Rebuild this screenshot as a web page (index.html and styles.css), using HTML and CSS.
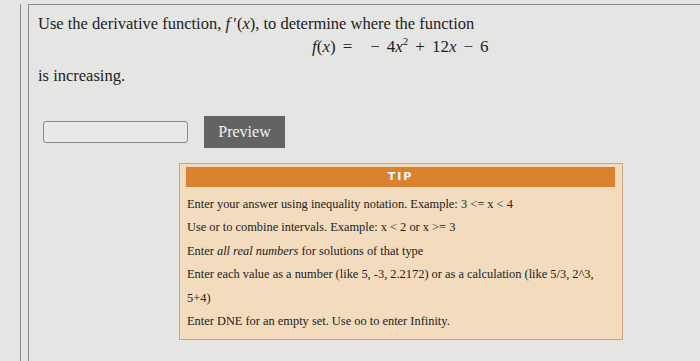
FILE: index.html
```html
<!DOCTYPE html>
<html>
<head>
  <title>Increasing interval</title>
  <link rel="stylesheet" href="styles.css">
</head>
<body>
  <div class="page">
    <div class="problem">
      <p class="question">Use the derivative function, <i>f</i>&thinsp;&prime;(<i>x</i>), to determine where the function</p>
      <div class="math"><i>f</i>(<i>x</i>)<span class="op">=</span><span class="op">&minus;</span>4<i>x</i><sup>2</sup><span class="op">+</span>12<i>x</i><span class="op">&minus;</span>6</div>
      <p class="question">is increasing.</p>

      <div class="answer-row">
        <input type="text" class="answer-input">
        <button class="preview-button">Preview</button>
      </div>

      <div class="tip-box">
        <div class="tip-header">TIP</div>
        <ul class="tip-list">
          <li>Enter your answer using inequality notation. Example: 3 &lt;= x &lt; 4</li>
          <li>Use or to combine intervals. Example: x &lt; 2 or x &gt;= 3</li>
          <li>Enter <i>all real numbers</i> for solutions of that type</li>
          <li>Enter each value as a number (like 5, -3, 2.2172) or as a calculation (like 5/3, 2^3, 5+4)</li>
          <li>Enter DNE for an empty set. Use oo to enter Infinity.</li>
        </ul>
      </div>
    </div>
  </div>
</body>
</html>
```

FILE: styles.css
```css
html, body {
  height: 100%;
}
body {
  margin: 0;
  background-color: #e5e5e3;
  font-family: "Liberation Serif", "Times New Roman", serif;
  color: #222;
  overflow: hidden;
}
.page {
  margin-left: 20px;
  height: 100%;
  border-left: 1px solid #8c8c8c;
  padding-left: 7px;
}
.problem {
  margin-top: 4px;
  height: 100%;
  border-top: 1px solid #8c8c8c;
  border-left: 1px solid #8c8c8c;
  padding: 9px 0 0 9px;
}
.question {
  margin: 0;
  font-size: 16.5px;
  line-height: 20px;
}
.math {
  padding-left: 274px;
  font-size: 17px;
  line-height: 20px;
  margin: 3px 0 9px;
}
.math .op {
  margin: 0 7px;
}
.math .op + .op {
  margin-left: 11px;
}
.math sup {
  font-size: 11px;
  line-height: 0;
}
.answer-row {
  display: flex;
  align-items: center;
  gap: 16px;
  margin: 30px 0 0 5px;
}
.answer-input {
  width: 145px;
  height: 22px;
  box-sizing: border-box;
  border: 1px solid #8a8a8a;
  border-radius: 3px;
  background-color: #e8e8e6;
}
.preview-button {
  width: 81px;
  height: 32px;
  background-color: #636363;
  color: #f2f2f2;
  border: none;
  font-family: "Liberation Serif", "Times New Roman", serif;
  font-size: 16px;
  padding: 0;
}
.tip-box {
  width: 444px;
  height: 177px;
  box-sizing: border-box;
  margin: 15px 0 0 141px;
  padding: 3px 7px 0 6px;
  background-color: #f3dbbd;
  border: 1px solid #c9a382;
}
.tip-header {
  height: 20px;
  line-height: 20px;
  background-color: #d9822f;
  color: #fff;
  text-align: center;
  font-family: "DejaVu Sans", sans-serif;
  font-weight: bold;
  font-size: 11px;
  letter-spacing: 2px;
}
.tip-list {
  list-style: none;
  margin: 6px 0 0 1px;
  padding: 0;
  font-size: 12.4px;
  line-height: 23.4px;
}
```
